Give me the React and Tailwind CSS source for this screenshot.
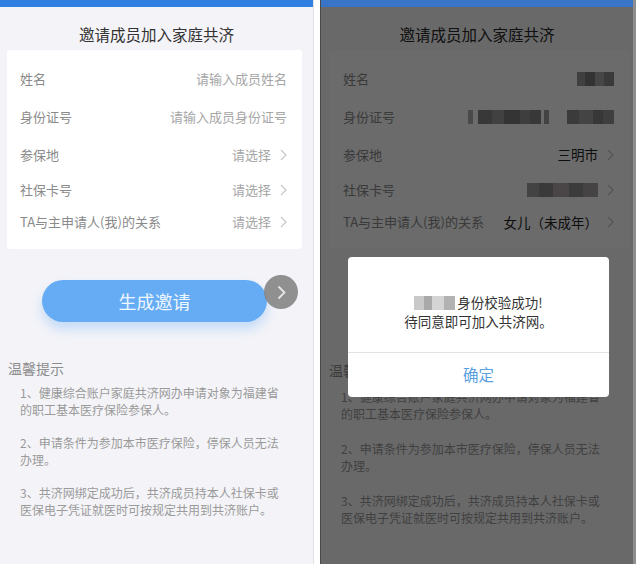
import React from "react";

function Chevron({ className }) {
  return (
    <svg width="7" height="12" viewBox="0 0 7 12" className={className}>
      <path d="M1 1l5 5-5 5" fill="none" stroke="currentColor" strokeWidth="1.2" />
    </svg>
  );
}

function Mosaic({ tiles, className }) {
  return (
    <div className={`flex h-[14px] blur-[0.6px] ${className}`}>
      {tiles.map((t, i) => (
        <div key={i} className="h-full" style={{ width: t[0], background: t[1] }} />
      ))}
    </div>
  );
}

function Row({ label, h, children }) {
  return (
    <div className={`flex items-center justify-between ${h}`}>
      <span className="text-[13px] text-[#8a8a8a]">{label}</span>
      {children}
    </div>
  );
}

function Select({ text, dark }) {
  return (
    <div className="flex items-center gap-[9px]">
      <span className={dark ? "text-[13.5px] text-[#222]" : "text-[13px] text-[#a6a6a6]"}>{text}</span>
      <Chevron className="text-[#c8c8c8]" />
    </div>
  );
}

const tips = [
  "1、健康综合账户家庭共济网办申请对象为福建省的职工基本医疗保险参保人。",
  "2、申请条件为参加本市医疗保险，停保人员无法办理。",
  "3、共济网绑定成功后，共济成员持本人社保卡或医保电子凭证就医时可按规定共用到共济账户。",
];

function LeftPanel() {
  return (
    <div className="relative w-[314px] h-[564px] shrink-0 bg-[#f4f4f8] border-r border-[#e2e2e8]">
      <div className="h-[7px] bg-[#2f80e2]" />
      <div className="pt-[17px] pb-[6px] text-center text-[15.5px] leading-5 text-[#333]">邀请成员加入家庭共济</div>
      <div className="ml-[7px] w-[295px] bg-white rounded-[3px] pt-[10px] pb-[11px] pl-[13px] pr-[15px]">
        <Row label="姓名" h="h-[38px]">
          <span className="text-[13px] text-[#a6a6a6]">请输入成员姓名</span>
        </Row>
        <Row label="身份证号" h="h-[38px]">
          <span className="text-[13px] text-[#a6a6a6]">请输入成员身份证号</span>
        </Row>
        <Row label="参保地" h="h-[37px]">
          <Select text="请选择" />
        </Row>
        <Row label="社保卡号" h="h-[33px]">
          <Select text="请选择" />
        </Row>
        <Row label="TA与主申请人(我)的关系" h="h-[32px]">
          <Select text="请选择" />
        </Row>
      </div>
      <div className="mt-[31px] ml-[42px] w-[225px] h-[42px] rounded-full bg-[#66acf5] shadow-[0_7px_12px_rgba(102,172,245,0.35)] flex items-center justify-center text-[18px] text-[#eef7ff]">
        生成邀请
      </div>
      <div className="absolute left-[264px] top-[275px] w-[34px] h-[34px] rounded-full bg-[#858585]/90 flex items-center justify-center">
        <svg width="9" height="15" viewBox="0 0 9 15">
          <path d="M1.5 1.5l6 6-6 6" fill="none" stroke="#e6e6e6" strokeWidth="1.8" />
        </svg>
      </div>
      <div className="mt-[36px] pl-[8px] text-[14px] leading-5 text-[#8c8c8c]">温馨提示</div>
      <div className="mt-[6px] ml-[20px] w-[264px] text-[12px] leading-[17px] text-[#9a9a9a] flex flex-col gap-[16px]">
        {tips.map((t) => (
          <p key={t}>{t}</p>
        ))}
      </div>
    </div>
  );
}

function RightPanel() {
  return (
    <div className="relative w-[312px] h-[564px] shrink-0 bg-[#fbfbfc] overflow-hidden">
      <div className="h-[7px] bg-[#3a74c6]" />
      <div className="pt-[17px] pb-[6px] text-center text-[15.5px] leading-5 text-[#2a2a2a]">邀请成员加入家庭共济</div>
      <div className="ml-[8px] w-[300px] bg-white rounded-[3px] pt-[10px] pb-[11px] pl-[14px] pr-[15px]">
        <Row label="姓名" h="h-[38px]">
          <Mosaic tiles={[[8, "#9a9a9a"], [10, "#7a7a7a"], [9, "#a8a8a8"], [10, "#8a8a8a"]]} />
        </Row>
        <Row label="身份证号" h="h-[38px]">
          <div className="flex items-center">
            <Mosaic tiles={[[5, "#b0b0b0"]]} className="mr-[5px]" />
            <Mosaic tiles={[[14, "#858585"], [12, "#9c9c9c"], [16, "#7c7c7c"], [10, "#959595"], [11, "#868686"]]} />
            <Mosaic tiles={[[5, "#a0a0a0"]]} className="ml-[3px] mr-[18px]" />
            <Mosaic tiles={[[12, "#8e8e8e"], [14, "#a2a2a2"], [10, "#848484"], [11, "#969696"]]} />
          </div>
        </Row>
        <Row label="参保地" h="h-[37px]">
          <Select text="三明市" dark />
        </Row>
        <Row label="社保卡号" h="h-[33px]">
          <div className="flex items-center gap-[9px]">
            <Mosaic tiles={[[12, "#a0a0a0"], [14, "#8a8a8a"], [16, "#b0a8aa"], [14, "#909090"], [15, "#a5a0a2"]]} />
            <Chevron className="text-[#c8c8c8]" />
          </div>
        </Row>
        <Row label="TA与主申请人(我)的关系" h="h-[32px]">
          <Select text="女儿（未成年）" dark />
        </Row>
      </div>
      <div className="mt-[31px] ml-[42px] w-[225px] h-[42px] rounded-full bg-[#66acf5]" />
      <div className="mt-[38px] pl-[8px] text-[14px] leading-5 text-[#8c8c8c]">温馨提示</div>
      <div className="mt-[8px] ml-[20px] w-[266px] text-[12px] leading-[17px] text-[#9a9a9a] flex flex-col gap-[18px]">
        {tips.map((t) => (
          <p key={t}>{t}</p>
        ))}
      </div>

      <div className="absolute inset-x-0 bottom-0 top-[7px] bg-black/[0.58] pt-[250px] pl-[27px]">
        <div className="w-[261px] h-[140px] bg-white rounded-[4px] flex flex-col">
          <div className="pt-[36px] pb-[21px] text-center text-[13.5px] leading-[19px] text-[#333]">
            <div className="flex items-center justify-center gap-[2px]">
              <Mosaic tiles={[[10, "#c9c9c9"], [8, "#a9a9a9"], [12, "#d4d4d4"], [11, "#b2b2b2"]]} className="h-[12px]" />
              <span>身份校验成功!</span>
            </div>
            <div>待同意即可加入共济网。</div>
          </div>
          <div className="flex-1 border-t border-[#e2e2e2] flex items-center justify-center text-[15.5px] text-[#5a9fe0]">
            确定
          </div>
        </div>
      </div>
    </div>
  );
}

export default function App() {
  return (
    <div className="flex w-[636px] h-[564px] overflow-hidden bg-white font-['Noto_Sans_CJK_SC','Noto_Sans',sans-serif]">
      <LeftPanel />
      <div className="w-[6px] h-[564px] shrink-0 bg-white" />
      <div className="w-[1px] h-[564px] shrink-0 bg-[#4a4a4a]" />
      <RightPanel />
      <div className="w-[3px] h-[564px] shrink-0 bg-[#8d8d8d]" />
    </div>
  );
}
